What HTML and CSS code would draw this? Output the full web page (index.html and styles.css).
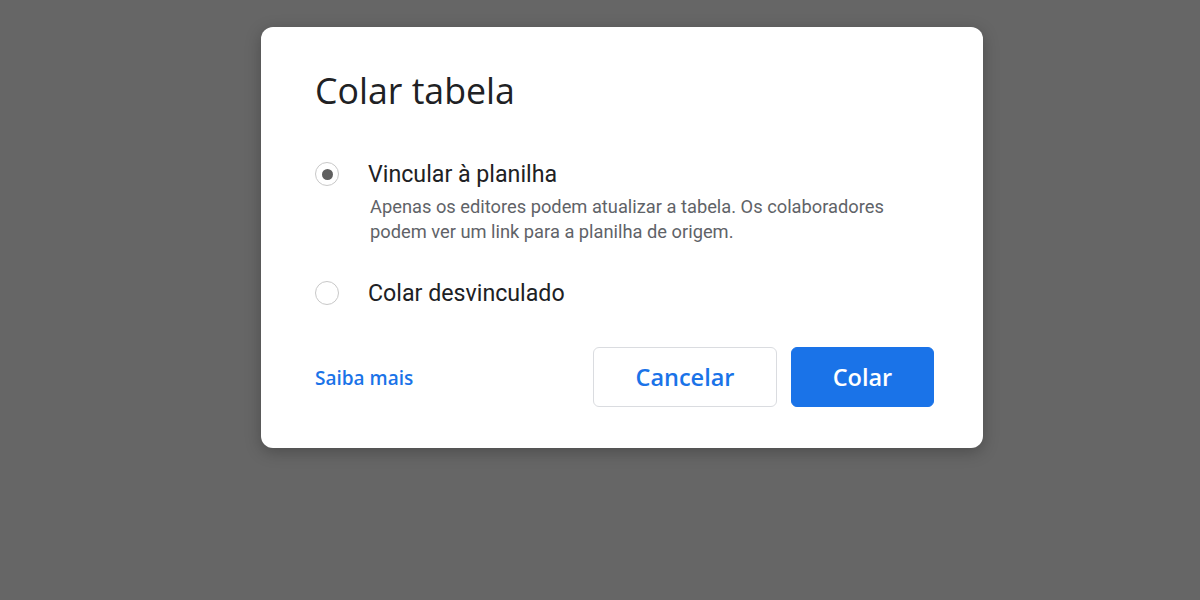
FILE: index.html
```html
<!DOCTYPE html>
<html lang="pt">
<head>
<meta charset="utf-8">
<title>Colar tabela</title>
<link rel="stylesheet" href="styles.css">
</head>
<body>
<div class="backdrop">
  <div class="dialog" role="dialog">
    <h1 class="title">Colar tabela</h1>
    <div class="options">
      <div class="option">
        <span class="radio checked"><span class="dot"></span></span>
        <div class="option-text">
          <div class="label">Vincular à planilha</div>
          <div class="desc">Apenas os editores podem atualizar a tabela. Os colaboradores podem ver um link para a planilha de origem.</div>
        </div>
      </div>
      <div class="option second">
        <span class="radio"></span>
        <div class="option-text">
          <div class="label">Colar desvinculado</div>
        </div>
      </div>
    </div>
    <div class="footer">
      <a class="link" href="#">Saiba mais</a>
      <div class="buttons">
        <button class="btn btn-secondary">Cancelar</button>
        <button class="btn btn-primary">Colar</button>
      </div>
    </div>
  </div>
</div>
</body>
</html>
```
FILE: styles.css
```css
html, body {
  margin: 0;
  padding: 0;
  height: 100%;
}
body {
  background: #666666;
  font-family: Roboto, "Liberation Sans", sans-serif;
}
.backdrop {
  padding: 27px 0 0 261px;
}
.dialog {
  box-sizing: border-box;
  width: 722px;
  height: 421px;
  background: #ffffff;
  border-radius: 12px;
  box-shadow: 0 4px 16px rgba(0,0,0,0.25);
  padding: 38px 49px 0 54px;
}
.title {
  margin: 0;
  font-family: "Open Sans", sans-serif;
  font-weight: 400;
  font-size: 35.7px;
  line-height: 50px;
  color: #202124;
}
.options {
  margin-top: 45px;
}
.option {
  display: flex;
  align-items: flex-start;
}
.option.second {
  margin-top: 35px;
}
.radio {
  box-sizing: border-box;
  flex: none;
  width: 24px;
  height: 24px;
  border: 1px solid #c8c8c8;
  border-radius: 50%;
  display: flex;
  align-items: center;
  justify-content: center;
  margin-top: 2px;
}
.dot {
  width: 11px;
  height: 11px;
  border-radius: 50%;
  background: #5f5f5f;
}
.option-text {
  margin-left: 29px;
}
.label {
  font-size: 23.2px;
  line-height: 28px;
  color: #202124;
}
.desc {
  margin-top: 6px;
  margin-left: 2px;
  width: 540px;
  font-size: 18.3px;
  line-height: 25px;
  color: #5f6368;
}
.footer {
  display: flex;
  align-items: center;
  justify-content: space-between;
  margin-top: 40px;
}
.link {
  font-family: "Open Sans", sans-serif;
  font-weight: 600;
  font-size: 19px;
  color: #1a73e8;
  text-decoration: none;
  margin-top: 2px;
}
.buttons {
  display: flex;
  gap: 14px;
}
.btn {
  box-sizing: border-box;
  height: 60px;
  border-radius: 6px;
  font-family: "Open Sans", sans-serif;
  font-weight: 600;
  font-size: 23.5px;
  cursor: pointer;
}
.btn-secondary {
  width: 184px;
  background: #ffffff;
  border: 1px solid #dadce0;
  color: #1a73e8;
}
.btn-primary {
  width: 143px;
  background: #1a73e8;
  border: 1px solid #1a73e8;
  color: #ffffff;
}
```
